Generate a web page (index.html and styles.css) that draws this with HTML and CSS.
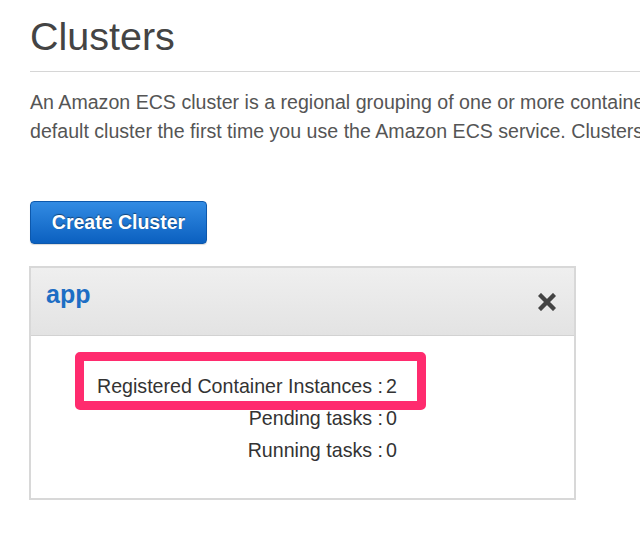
FILE: index.html
```html
<!DOCTYPE html>
<html>
<head>
<meta charset="utf-8">
<link rel="stylesheet" href="styles.css">
</head>
<body>
<div class="page">
  <h1 class="title">Clusters</h1>
  <p class="intro">
    <span class="line">An Amazon ECS cluster is a regional grouping of one or more container instances on which you can run task requests.</span>
    <span class="line">default cluster the first time you use the Amazon ECS service. Clusters can contain multiple different container instance types.</span>
  </p>
  <button class="btn-primary" type="button">Create Cluster</button>
  <div class="panel">
    <div class="panel-head">
      <a class="cluster-name" href="#">app</a>
      <span class="close" aria-label="Delete">
        <svg width="18" height="18" viewBox="0 0 18 18"><path d="M3 3 L15 15 M15 3 L3 15" stroke="#444" stroke-width="4.4" stroke-linecap="square" fill="none"/></svg>
      </span>
    </div>
    <div class="panel-body">
      <dl class="stats">
        <dt>Registered Container Instances :</dt><dd>2</dd>
        <dt>Pending tasks :</dt><dd>0</dd>
        <dt>Running tasks :</dt><dd>0</dd>
      </dl>
    </div>
    <div class="highlight"></div>
  </div>
</div>
</body>
</html>
```
FILE: styles.css
```css
html, body {
  margin: 0;
  padding: 0;
  background: #fff;
  overflow: hidden;
}
body {
  font-family: "Liberation Sans", Arial, Helvetica, sans-serif;
  width: 640px;
  height: 534px;
}
.page {
  padding-left: 30px;
}
.title {
  margin: 14px 0 0 0;
  font-size: 39.5px;
  line-height: 44px;
  font-weight: normal;
  color: #444;
  padding-bottom: 13px;
  border-bottom: 1px solid #d6d6d6;
}
.intro {
  margin: 16px 0 0 0;
  font-size: 19.6px;
  line-height: 28.5px;
  color: #555;
  white-space: nowrap;
}
.line {
  display: block;
}
.btn-primary {
  display: block;
  margin-top: 56px;
  width: 177px;
  height: 43px;
  padding: 0;
  border: 1px solid #0d58ac;
  border-radius: 4px;
  background: linear-gradient(#328be3, #0b60c0);
  color: #fff;
  font-family: "Liberation Sans", Arial, Helvetica, sans-serif;
  font-weight: bold;
  font-size: 19.5px;
  line-height: 41px;
  text-shadow: 0 -1px 1px rgba(0, 0, 0, 0.45);
  box-shadow: 0 1px 1px rgba(0, 0, 0, 0.15);
}
.panel {
  position: relative;
  margin-top: 22px;
  width: 543px;
  border: 2px solid #d8d8d8;
  margin-left: -1px;
}
.panel-head {
  display: flex;
  justify-content: space-between;
  align-items: flex-start;
  height: 68px;
  box-sizing: border-box;
  padding: 11px 18px 0 15px;
  background: linear-gradient(#efefef, #e3e3e3);
  border-bottom: 1px solid #d2d2d2;
}
.cluster-name {
  font-size: 25px;
  line-height: 30px;
  font-weight: bold;
  color: #1d6ec4;
  text-decoration: none;
}
.close {
  display: block;
  margin-top: 14px;
  width: 18px;
  height: 18px;
}
.close svg {
  display: block;
}
.panel-body {
  padding: 34px 0 32px 0;
}
.stats {
  display: grid;
  grid-template-columns: 352px auto;
  column-gap: 3px;
  margin: 0;
  font-size: 19.65px;
  line-height: 32px;
  color: #333;
}
.stats dt {
  text-align: right;
  margin: 0;
}
.stats dd {
  margin: 0;
}
.highlight {
  position: absolute;
  left: 44px;
  top: 84px;
  width: 351px;
  height: 58px;
  box-sizing: border-box;
  border: 9px solid #ff2b6e;
  border-radius: 5px;
}
```
